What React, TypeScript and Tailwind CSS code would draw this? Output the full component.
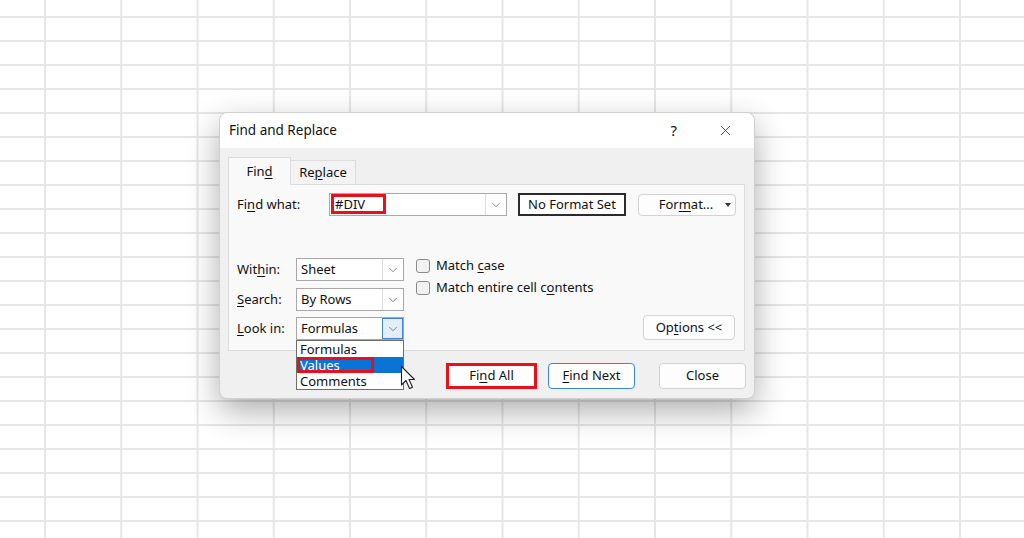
import React from "react";
import { ChevronDown, X } from "lucide-react";

function U({ children }: { children: React.ReactNode }) {
    return <span className="underline underline-offset-2 decoration-1">{children}</span>;
}

function Select({ value, focused }: { value: string; focused?: boolean }) {
    return (
        <div className="flex h-[23px] w-[108px] items-stretch border border-[#a8a8a8] bg-white">
            <span className="flex flex-1 items-center pl-[4px]">{value}</span>
            <span
                className={
                    focused
                        ? "flex w-[21px] items-center justify-center border border-[#3c87d1] bg-[#e3eefa]"
                        : "flex w-[21px] items-center justify-center border-l border-[#dcdcdc]"
                }
            >
                <ChevronDown size={14} strokeWidth={1.2} className="text-[#5a5a5a]" />
            </span>
        </div>
    );
}

function Checkbox({ children }: { children: React.ReactNode }) {
    return (
        <div className="flex h-[14px] items-center gap-[6px]">
            <span className="h-[14px] w-[14px] rounded-[3px] border border-[#8a8a8a] bg-[#f2f2f2]" />
            <span>{children}</span>
        </div>
    );
}

function Cursor() {
    return (
        <svg width="16" height="26" viewBox="0 0 16 26" className="absolute left-[103px] top-[24px]">
            <path
                d="M1.5 1.5 L1.5 20 L6 15.5 L9.5 23.5 L12.5 22.2 L9 14.5 L14.5 14.5 Z"
                fill="white"
                stroke="#222"
                strokeWidth="1.1"
                strokeLinejoin="round"
            />
        </svg>
    );
}

export default function App() {
    return (
        <div
            className="relative h-[538px] w-[1024px] overflow-hidden bg-white bg-[linear-gradient(to_right,#e6e6e6_2px,transparent_2px),linear-gradient(to_bottom,#e6e6e6_2px,transparent_2px)] bg-[size:76.25px_24px] bg-[position:44px_16px] font-['Noto_Sans',sans-serif] text-[13px] text-[#111]"
        >
            <div className="absolute left-[219px] top-[112px] flex h-[287px] w-[536px] flex-col rounded-[8px] border border-[#d0d0d0] bg-[#f0f0f0] shadow-[0_12px_32px_rgba(0,0,0,0.32)]">
                {/* title bar */}
                <div className="flex h-[35px] items-center rounded-t-[8px] bg-white pb-[1px] pl-[9px] pr-[20px]">
                    <span className="text-[13.5px]">Find and Replace</span>
                    <span className="ml-auto text-[15px]">?</span>
                    <X size={17} strokeWidth={1.1} className="ml-[40px] text-[#222]" />
                </div>

                <div className="flex flex-col px-[8px] pt-[9px]">
                    {/* tabs */}
                    <div className="flex h-[27px] items-end">
                        <div className="relative z-10 -mb-px flex h-[28px] w-[63px] items-center justify-center border border-b-0 border-[#dcdcdc] bg-[#f9f9f9]">
                            Fin<U>d</U>
                        </div>
                        <div className="flex h-[24px] w-[65px] items-center justify-center border border-b-0 border-l-0 border-[#dcdcdc] bg-[#f3f3f3]">
                            Re<U>p</U>lace
                        </div>
                    </div>

                    {/* tab page */}
                    <div className="flex h-[167px] w-[517px] flex-col border border-[#dcdcdc] bg-[#f9f9f9] pl-[8px] pt-[8px]">
                        <div className="flex h-[23px] items-center">
                            <span className="w-[92px]">
                                Fi<U>n</U>d what:
                            </span>
                            <div className="relative flex h-[23px] w-[178px] items-stretch border border-[#a8a8a8] bg-white">
                                <span className="flex flex-1 items-center pl-[5px]">#DIV</span>
                                <span className="flex w-[21px] items-center justify-center border-l border-[#dcdcdc]">
                                    <ChevronDown size={14} strokeWidth={1.2} className="text-[#5a5a5a]" />
                                </span>
                                <span className="absolute left-[1px] top-[0px] h-[20px] w-[55px] border-[3px] border-[#e8111b]" />
                            </div>
                            <div className="ml-[11px] flex h-[23px] w-[108px] items-center justify-center border-2 border-[#2b2b2b] bg-white">
                                No Format Set
                            </div>
                            <div className="relative ml-[12px] flex h-[22px] w-[98px] items-center justify-center rounded-[4px] border border-[#d2d2d2] bg-[#fdfdfd]">
                                <span className="-ml-[2px]">
                                    For<U>m</U>at...
                                </span>
                                <span className="absolute right-[4px] top-[8px] h-0 w-0 border-x-[3px] border-t-[4px] border-x-transparent border-t-[#333]" />
                            </div>
                        </div>

                        <div className="mt-[42px] flex">
                            <div className="flex flex-col">
                                <div className="flex items-center">
                                    <span className="w-[59px]">
                                        Wit<U>h</U>in:
                                    </span>
                                    <Select value="Sheet" />
                                </div>
                                <div className="mt-[7px] flex items-center">
                                    <span className="w-[59px]">
                                        <U>S</U>earch:
                                    </span>
                                    <Select value="By Rows" />
                                </div>
                                <div className="mt-[6px] flex items-center">
                                    <span className="w-[59px]">
                                        <U>L</U>ook in:
                                    </span>
                                    <div className="relative">
                                        <Select value="Formulas" focused />
                                        {/* open list */}
                                        <div className="absolute left-0 top-[23px] z-20 flex w-[108px] flex-col border border-[#6e6e6e] bg-white leading-[16px]">
                                            <span className="h-[16px] pl-[3px]">Formulas</span>
                                            <span className="relative h-[16px] bg-[#0a74d6] pl-[3px] text-white">
                                                Values
                                                <span className="absolute left-0 top-0 h-[16px] w-[77px] border-[3px] border-[#e8111b]" />
                                            </span>
                                            <span className="h-[16px] pl-[3px]">Comments</span>
                                            <Cursor />
                                        </div>
                                    </div>
                                </div>
                            </div>

                            <div className="ml-[12px] mt-[1px] flex flex-col gap-[8px]">
                                <Checkbox>
                                    Match <U>c</U>ase
                                </Checkbox>
                                <Checkbox>
                                    Match entire cell c<U>o</U>ntents
                                </Checkbox>
                            </div>

                            <div className="ml-auto mr-[9px] flex h-[25px] w-[92px] items-center justify-center self-end rounded-[4px] border border-[#d2d2d2] bg-[#fdfdfd]">
                                Op<U>t</U>ions &lt;&lt;
                            </div>
                        </div>
                    </div>

                    {/* bottom buttons */}
                    <div className="mt-[12px] flex h-[26px] pl-[218px]">
                        <div className="flex w-[91px] items-center justify-center border-[3px] border-[#e8111b] bg-white">
                            Fi<U>n</U>d All
                        </div>
                        <div className="ml-[11px] flex w-[87px] items-center justify-center rounded-[4px] border-[1.5px] border-[#3c87d1] bg-white">
                            <U>F</U>ind Next
                        </div>
                        <div className="ml-[24px] flex w-[87px] items-center justify-center rounded-[4px] border border-[#d2d2d2] bg-[#fdfdfd]">
                            Close
                        </div>
                    </div>
                </div>
            </div>
        </div>
    );
}
